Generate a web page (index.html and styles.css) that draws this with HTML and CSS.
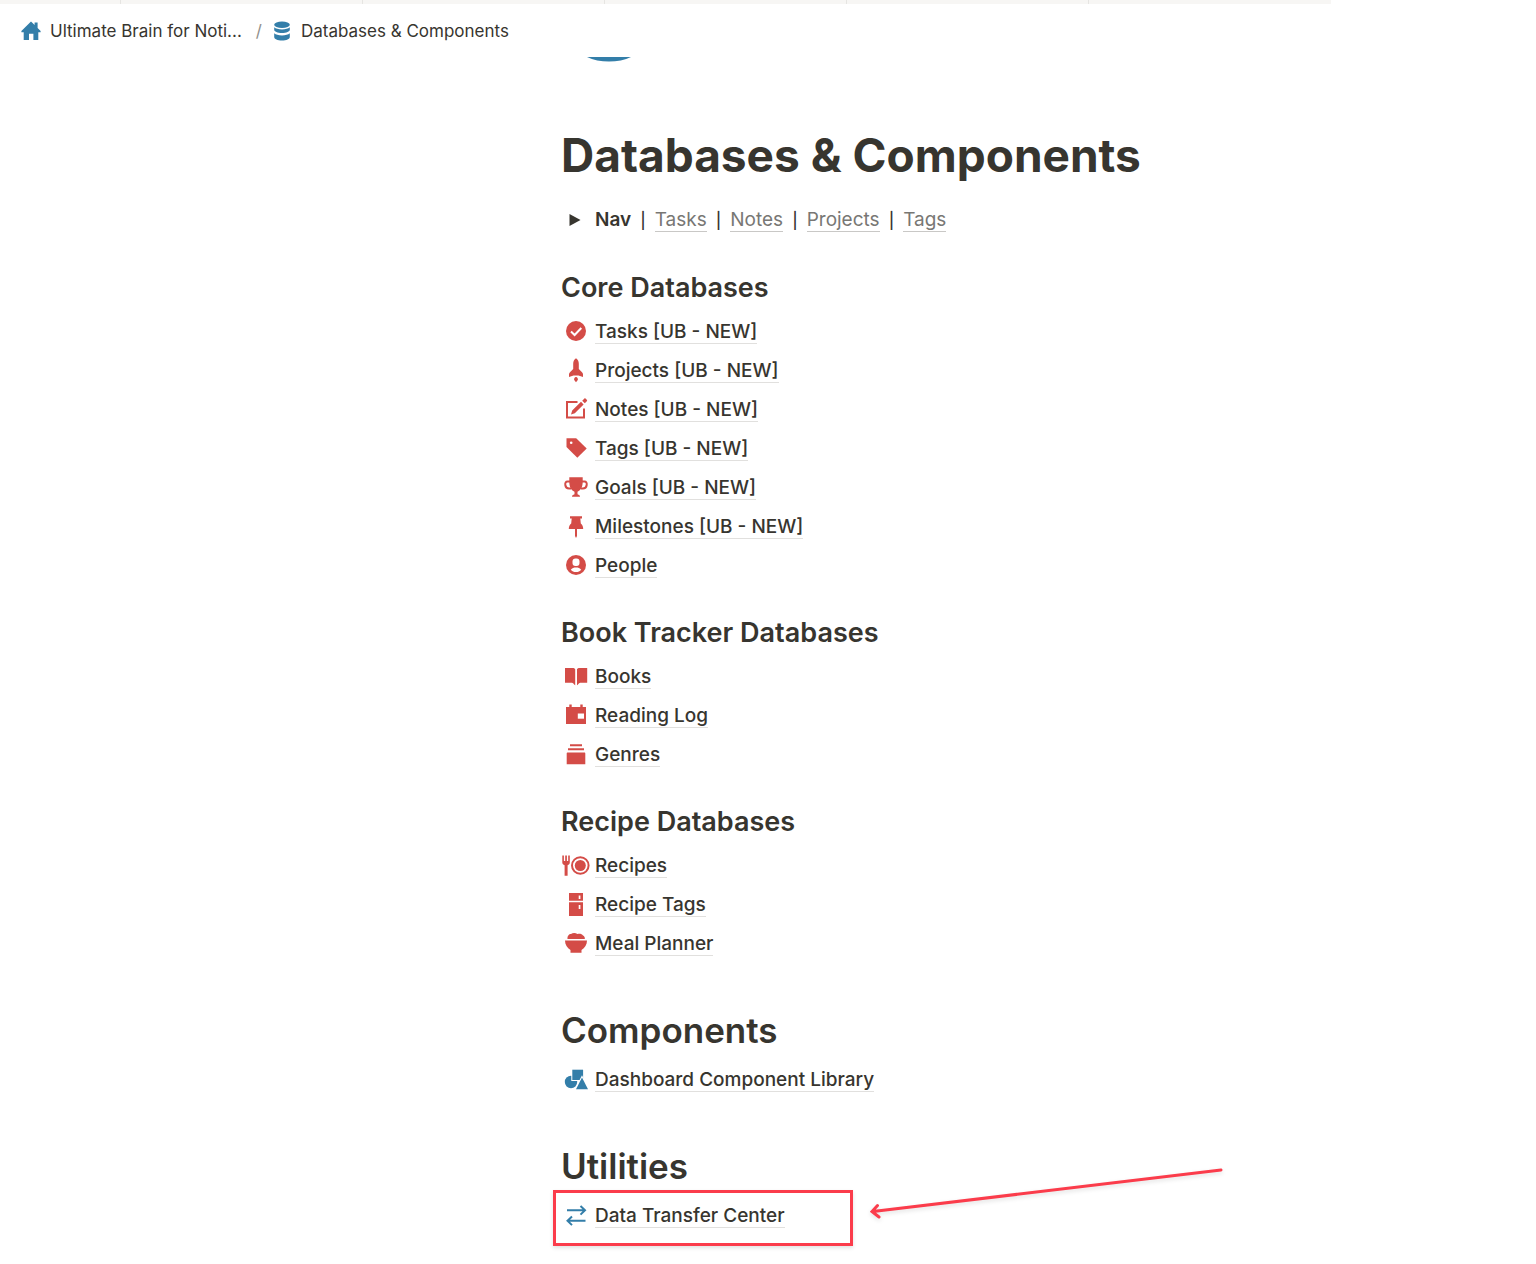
FILE: index.html
```html
<!DOCTYPE html>
<html lang="en">
  <head>
    <meta charset="utf-8">
    <title>Databases &amp; Components</title>
    <link rel="stylesheet" href="styles.css">
  </head>
  <body>
    <div class="tabs"><span></span><span></span><span></span><span></span><span></span><span></span></div>
    <nav class="breadcrumb" aria-label="Breadcrumb">
      <a href="#">
        <svg class="crumb-icon" viewBox="0 0 20 20"><path d="M10 .6 13.6 4V1.6h3V7L19.6 10v1.3H17.3V19H12.4v-6.3H8V19H2.7v-7.7H.4V10z"/></svg>
        <span>Ultimate Brain for Noti...</span>
      </a>
      <span class="slash">/</span>
      <a href="#">
        <svg class="crumb-icon" viewBox="0 0 20 20"><ellipse cx="10" cy="3.7" rx="7.8" ry="3.2"/><path d="M2.2 6.2c1.6 1.4 4.2 2.2 7.8 2.2s6.200-.8 7.800-2.200v2.600c0 1.800-3.400 3.200-7.800 3.200s-7.800-1.400-7.800-3.200zM2.200 12.200c1.600 1.400 4.200 2.200 7.800 2.200s6.200-.8 7.800-2.200v3.700c0 2-3.400 3.500-7.800 3.500s-7.800-1.500-7.800-3.500z"/></svg>
        <span>Databases &amp; Components</span>
      </a>
    </nav>

    <main class="page">
      <svg class="page-icon" viewBox="0 0 96 5"><path d="M26 0h44c-6 3-14 4.500-22 4.500S32 3 26 0z"/></svg>
      <h1 class="title">Databases &amp; Components</h1>

      <div class="nav-row">
        <button class="toggle" type="button" aria-label="Open nav"><svg viewBox="0 0 28 28"><path d="M8.500 8v12L19.500 14z"/></svg></button>
        <b>Nav</b><i>|</i><a href="#">Tasks</a><i>|</i><a href="#">Notes</a><i>|</i><a href="#">Projects</a><i>|</i><a href="#">Tags</a>
      </div>

      <h3>Core Databases</h3>
      <ul class="links">
        <li><svg viewBox="0 0 28 28"><circle cx="14" cy="14" r="10"/><path class="cut-line" d="M9 14.500 12.600 18 19.300 11"/></svg><a href="#">Tasks [UB - NEW]</a></li>
        <li><svg viewBox="0 0 28 28"><path d="M14 2.300c1.800 1.200 2.800 3.200 2.800 5.500V13l3.200 3.200c.6.6 1 1.200 1 2V21l-4.500-1.500h-5L7 21v-2.800c0-.8.4-1.400 1-2L11.200 13V7.800c0-2.300 1-4.300 2.800-5.500zM14 26.300 12.200 24c-.4-1 .3-3 1.800-3s2.200 2 1.800 3z"/></svg><a href="#">Projects [UB - NEW]</a></li>
        <li><svg viewBox="0 0 28 28"><path class="line" d="M15.500 7H5v15.500h17V13.500"/><path d="M9 19.500l1.200-4 8.800-8.700 2.600 2.600-8.800 8.800zM20.200 5.700l2-2c.5-.5 1-.5 1.500 0l1.100 1.100c.5.5.5 1 0 1.500l-2 2z"/></svg><a href="#">Notes [UB - NEW]</a></li>
        <li><svg viewBox="0 0 28 28"><path d="M4.500 4.300h9.700l10.500 10.200-9.400 9.300L4.500 13z"/><circle class="cut" cx="9.200" cy="8.700" r="1.300"/></svg><a href="#">Tags [UB - NEW]</a></li>
        <li><svg viewBox="0 0 28 28"><path d="M7.300 4.200h13.400v4.500c0 5-1.700 8.500-5.200 10v2.600c1.600.4 2.500 1.200 2.500 2.500h-8c0-1.300.9-2.100 2.500-2.500v-2.600c-3.500-1.500-5.200-5-5.200-10z"/><path class="line" d="M8 8.500H5.500C3.800 8.500 3 10 3.300 12s1.700 3.500 3.700 3.500h2M20 8.500h2.500c1.700 0 2.500 1.500 2.200 3.500s-1.700 3.500-3.700 3.500h-2"/></svg><a href="#">Goals [UB - NEW]</a></li>
        <li><svg viewBox="0 0 28 28"><path d="M8 4.200h12v2.400h-1.700l.5 5c1.500 1.200 2.400 2.900 2.400 5.400H15v7l-1 2-1-2v-7H6.800c0-2.500.9-4.200 2.400-5.400l.5-5H8z"/></svg><a href="#">Milestones [UB - NEW]</a></li>
        <li><svg viewBox="0 0 28 28"><circle cx="14" cy="14" r="10"/><rect class="cut" x="10.500" y="7.500" width="7" height="7.500" rx="3"/><path class="cut" d="M8.800 18.800c1.200-1.600 3-2.200 5.200-2.200s4 .6 5.200 2.200c-1.300 1.500-3 2.300-5.200 2.300s-3.900-.8-5.200-2.300z"/></svg><a href="#">People</a></li>
      </ul>

      <h3>Book Tracker Databases</h3>
      <ul class="links">
        <li><svg viewBox="0 0 28 28"><path d="M3 6h7.500c1.300 0 2.300.4 2.700 1.200v16c-1.200 0-1.400-2.400-3.200-2.400H3zM25.200 6h-7.500c-1.300 0-2.300.4-2.700 1.200v16c1.200 0 1.400-2.400 3.200-2.400h7z"/></svg><a href="#">Books</a></li>
        <li><svg viewBox="0 0 28 28"><path d="M4 6h3.300V3.500h2.400V6h8.600V3.500h2.400V6H24v17H4z"/><path class="cut" d="M15.800 12.500H22v5.200h-6.200z"/></svg><a href="#">Reading Log</a></li>
        <li><svg viewBox="0 0 28 28"><path d="M8 4.200h12v2H8zM6 8.200h16v2H6zM5.700 12.400h16.600c.6 0 1 .4 1 1v10.800H4.700V13.400c0-.6.4-1 1-1z"/></svg><a href="#">Genres</a></li>
      </ul>

      <h3>Recipe Databases</h3>
      <ul class="links">
        <li><svg viewBox="0 0 28 28"><path d="M.3 4.500h1.600V10h1.300V4.500h1.700V10h1.300V4.500h1.600v7c0 1.500-1 2.300-2.200 2.700v10.500h-3V14.200C1.300 13.800.3 13 .3 11.500z"/><circle class="line" cx="18.300" cy="14.500" r="8.300"/><circle cx="18.300" cy="14.500" r="5.500"/></svg><a href="#">Recipes</a></li>
        <li><svg viewBox="0 0 28 28"><path d="M7 3h14v7.700H7zM7 12.200h14V26H7z"/><path class="cut" d="M16.700 5.500h1.700v3.500h-1.700zM16.700 15h1.700v4h-1.700z"/></svg><a href="#">Recipe Tags</a></li>
        <li><svg viewBox="0 0 28 28"><path d="M5.500 10c-.3-3 1.500-5 3.500-5 1.700-1.400 4.500-1.400 6.500 0 2.800-.4 4.500.1 5.500 1.600 1.400.7 2 1.900 1.800 3.400zM3 11.500h22c0 4.300-2.200 7.500-5.500 9.500v2.800h-11V21C5.200 19 3 15.800 3 11.500z"/></svg><a href="#">Meal Planner</a></li>
      </ul>

      <h2>Components</h2>
      <ul class="links blue">
        <li><svg viewBox="0 0 28 28"><circle cx="9" cy="17" r="6.200"/><path class="gap" d="M10.300 4.700h10.800V15H10.300z"/><path class="gap" d="M20 12.500 26 24.300H14z"/></svg><a href="#">Dashboard Component Library</a></li>
      </ul>

      <h2>Utilities</h2>
      <ul class="links blue">
        <li class="marked">
          <svg viewBox="0 0 28 28"><path class="line" d="M5 9.300h17M18.500 5l4.500 4.300-4.500 4.300M23.500 19.800h-17M10 15.500l-4.500 4.300 4.500 4.300"/></svg><a href="#">Data Transfer Center</a>
          <svg class="arrow" viewBox="0 0 360 60"><path d="M354 8 6 49.500M10.500 43.500 5 49.500l7 5.500"/></svg>
        </li>
      </ul>
    </main>
  </body>
</html>
```

FILE: styles.css
```css
*,
*::before {
  box-sizing: border-box;
}
body {
  margin: 0;
  background: #fff;
  color: #37352f;
  font-family: Inter, "Liberation Sans", sans-serif;
  font-size: 19px;
}
a {
  color: inherit;
  text-decoration: none;
}

/* bottom edge of the tab strip */
.tabs {
  display: grid;
  grid-template-columns: 120px repeat(4, 242px) 1fr;
  width: 1331px;
  max-width: 100%;
  height: 4px;
  background: #f7f6f4;
}
.tabs span + span {
  border-left: 1px solid #e6e5e2;
}

.breadcrumb {
  display: flex;
  align-items: center;
  height: 53px;
  padding-left: 21px;
  font-size: 17px;
}
.breadcrumb a {
  display: flex;
  align-items: center;
  gap: 9px;
}
.crumb-icon {
  width: 20px;
  height: 20px;
  fill: #337ea9;
}
.slash {
  margin: 0 10px 0 14px;
  color: #91908c;
}

.page {
  padding: 0 24px 29px 561px;
}
.page-icon {
  display: block;
  width: 96px;
  height: 5px;
  fill: #337ea9;
}
h1,
h2,
h3 {
  margin: 0;
}
.title {
  margin-top: 64px;
  font-size: 46px;
  font-weight: 700;
  line-height: 58px;
}
h2 {
  margin: 44px 0 5px;
  font-size: 35px;
  font-weight: 600;
  line-height: 48px;
}
h3 {
  margin: 30px 0 4px;
  font-size: 27px;
  font-weight: 600;
  line-height: 38px;
}

.nav-row {
  display: flex;
  align-items: center;
  height: 39px;
  margin-top: 16px;
}
.nav-row b {
  font-weight: 600;
}
.nav-row i {
  margin: 0 9px;
  font-size: 16px;
  font-style: normal;
  font-weight: 500;
}
.nav-row a {
  color: #787774;
  border-bottom: 1px solid #c9c8c6;
}
.toggle {
  width: 28px;
  height: 28px;
  margin-right: 6px;
  padding: 0;
  border: 0;
  background: none;
}
.toggle svg {
  display: block;
  fill: #37352f;
}

.links {
  margin: 0;
  padding: 0;
  list-style: none;
  fill: #d44c47;
  stroke: #d44c47;
}
.blue {
  fill: #337ea9;
  stroke: #337ea9;
}
.links li {
  display: flex;
  align-items: center;
  height: 39px;
}
.links svg {
  width: 28px;
  height: 28px;
  margin: 0 5px 0 1px;
  stroke-width: 0;
}
.links a {
  margin-top: 3px;
  font-weight: 500;
  line-height: 23px;
  border-bottom: 1px solid #e1e0de;
}
.links .line {
  fill: none;
  stroke-width: 2;
}
.cut {
  fill: #fff;
}
.links .cut-line {
  fill: none;
  stroke: #fff;
  stroke-width: 2;
}
.links .gap {
  stroke: #fff;
  stroke-width: 2;
  paint-order: stroke;
}

/* red callout round the last link */
.marked {
  position: relative;
}
.marked::before {
  content: "";
  position: absolute;
  top: -5px;
  left: -8px;
  width: 300px;
  height: 56px;
  border: 3px solid #fb3c4b;
  box-shadow: 0 2px 4px rgba(0, 0, 0, .12);
}
.links .arrow {
  position: absolute;
  top: -33px;
  left: 306px;
  width: 360px;
  height: 60px;
  margin: 0;
  fill: none;
  stroke: #fb3c4b;
  stroke-width: 3;
  stroke-linecap: round;
  filter: drop-shadow(0 2px 2px rgba(0, 0, 0, .12));
}
```
